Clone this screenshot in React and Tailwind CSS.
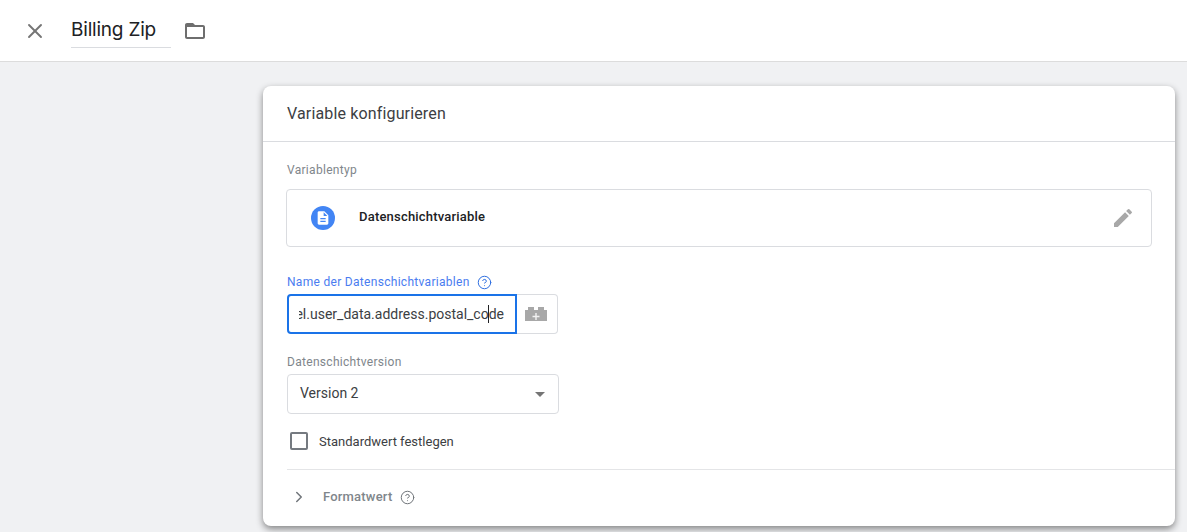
import { X, ChevronRight, CircleHelp } from 'lucide-react';

function Label({ children, className = '' }) {
  return <div className={`text-[12px] leading-[16px] tracking-[0.3px] text-[#80868b] ${className}`}>{children}</div>;
}

function HelpIcon({ color }) {
  return <CircleHelp size={15} color={color} strokeWidth={1.6} />;
}

export default function App() {
  return (
    <div className="h-[532px] overflow-hidden bg-[#f0f1f3] font-['Roboto',sans-serif] text-[#202124]">
      {/* Top bar */}
      <div className="flex h-[62px] items-center border-b border-[#dcdcdc] bg-white">
        <button className="ml-[23px] flex h-6 w-6 items-center justify-center text-[#757575]">
          <X size={24} strokeWidth={1.9} />
        </button>
        <div className="ml-[24px] flex h-[35px] w-[100px] items-center border-b border-[#dadce0] pt-px font-['Inter',sans-serif] text-[19px] tracking-[-0.2px] text-[#202124]">
          Billing Zip
        </div>
        <svg className="ml-[12px]" width="24" height="24" viewBox="0 0 24 24" fill="#6e6e6e">
          <path d="M20 6h-8l-2-2H4c-1.1 0-2 .9-2 2v12c0 1.1.9 2 2 2h16c1.1 0 2-.9 2-2V8c0-1.1-.9-2-2-2zm0 12H4V8h16v10z" />
        </svg>
      </div>

      {/* Card */}
      <div className="ml-[263px] mt-6 h-[440px] w-[912px] rounded-lg bg-white shadow-[0_3px_7px_rgba(0,0,0,0.45)]">
        <div className="flex h-[56px] items-center border-b border-[#dadce0] px-6 text-[16px] tracking-[0.15px] text-[#3c4043]">
          Variable konfigurieren
        </div>
        <div className="pl-6 pt-[20px]">
          <Label>Variablentyp</Label>
          <div className="-ml-px mt-[11px] flex h-[58px] w-[866px] items-center rounded border border-[#dadce0]">
            <div className="ml-6 flex h-6 w-6 items-center justify-center rounded-full bg-[#4285f4]">
              <svg width="16" height="16" viewBox="0 0 24 24" fill="white">
                <path d="M14 2H6c-1.1 0-2 .9-2 2v16c0 1.1.9 2 2 2h12c1.1 0 2-.9 2-2V8l-6-6zm2 16H8v-2h8v2zm0-4H8v-2h8v2zm-3-5V3.5L18.5 9H13z" />
              </svg>
            </div>
            <span className="ml-[24px] pb-[2px] text-[13px] font-medium tracking-[0.2px] text-[#202124]">Datenschichtvariable</span>
            <svg className="ml-auto mr-4" width="24" height="24" viewBox="0 0 24 24" fill="#a8a8a8">
              <path d="M3 17.25V21h3.75L17.81 9.94l-3.75-3.75L3 17.25zM20.71 7.04a1 1 0 0 0 0-1.41l-2.34-2.34a1 1 0 0 0-1.41 0l-1.83 1.83 3.75 3.75 1.83-1.83z" />
            </svg>
          </div>

          <div className="mt-[27px] flex items-center gap-[7px] text-[12px] leading-[16px] tracking-[0.3px] text-[#4a7cf0]">
            Name der Datenschichtvariablen
            <HelpIcon color="#2f6fe0" />
          </div>
          <div className="mt-[4px] flex h-10 w-[271px]">
            <div className="relative h-10 w-[230px] rounded-l border-2 border-[#1a73e8] pl-[10px] pr-[11px] text-[14px] text-[#3c4043]">
              <div className="flex h-full items-center justify-end overflow-hidden whitespace-nowrap pt-px">
                eventModel.user_data.address.postal_code
              </div>
              <span className="absolute right-[26px] top-[9px] h-[18px] w-px bg-[#202124]" />
            </div>
            <div className="flex h-10 w-[41px] items-center justify-center rounded-r border border-l-0 border-[#dadce0] pr-[2px]">
              <svg width="24" height="16" viewBox="0 0 24 16" fill="#a8a8a8">
                <path d="M1 4h3V1h6v3h4V1h6v3h3v11H1z" />
                <path d="M11.300 7h1.400v2.800h2.800v1.400h-2.800V14h-1.400v-2.800H8.500V9.800h2.800z" fill="#f2f2f2" />
              </svg>
            </div>
          </div>

          <Label className="mt-[20px]">Datenschichtversion</Label>
          <div className="mt-[4px] flex h-10 w-[272px] items-center justify-between rounded border border-[#dadce0] pl-3 pr-[13px] text-[14px] text-[#3c4043]">
            <span className="pb-[2px]">Version 2</span>
            <div className="h-0 w-0 border-x-[5.5px] border-t-[5.5px] border-x-transparent border-t-[#757575]" />
          </div>

          <div className="mt-[18px] flex items-center">
            <div className="ml-[3px] h-[18px] w-[18px] rounded-[2px] border-2 border-[#757a80]" />
            <span className="ml-[11px] pt-px text-[13px] leading-[17px] text-[#3c4043]">Standardwert festlegen</span>
          </div>

          <div className="mt-[19px] border-t border-[#e4e5e7]" />
          <div className="flex h-[54px] items-center">
            <ChevronRight className="ml-[3px]" size={18} color="#70757a" strokeWidth={2} />
            <span className="ml-[15px] text-[13px] font-medium tracking-[0.2px] text-[#80868b]">Formatwert</span>
            <span className="ml-[7px] flex"><HelpIcon color="#70757a" /></span>
          </div>
        </div>
      </div>
    </div>
  );
}
